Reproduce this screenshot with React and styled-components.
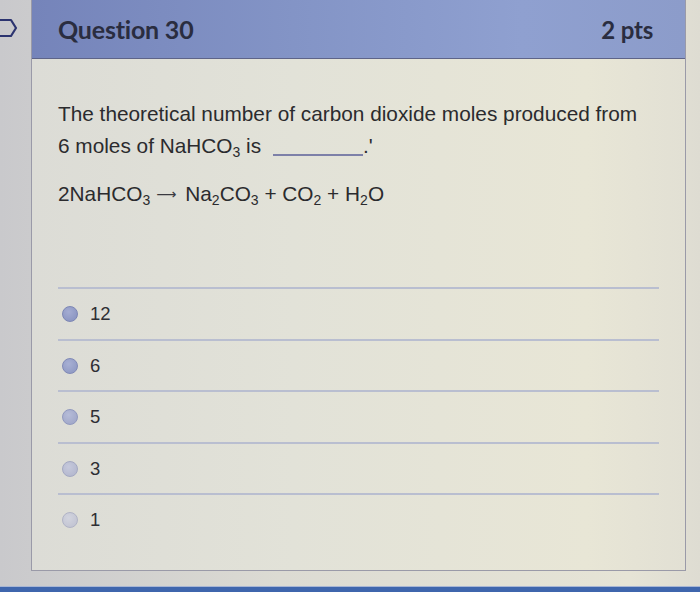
import React from "react";
import styled, { createGlobalStyle } from "styled-components";

const Global = createGlobalStyle`
  html, body { margin: 0; padding: 0; }
  body {
    width: 700px;
    height: 592px;
    overflow: hidden;
    background: #d9d8d2;
    font-family: "Liberation Sans", Arial, sans-serif;
  }
`;

const Page = styled.div`
  width: 700px;
  height: 592px;
  display: flex;
  flex-direction: column;
  background: linear-gradient(90deg, #c9c9cc 0%, #dcdbd3 40%, #e6e4d6 90%, #dedcd2 100%);
`;

const Main = styled.div`
  flex: 1;
  display: flex;
  align-items: flex-start;
`;

const Gutter = styled.div`
  width: 31px;
  flex-shrink: 0;
  padding-top: 18px;
  display: flex;
`;

const Card = styled.div`
  width: 655px;
  height: 571px;
  box-sizing: border-box;
  border: 1px solid #9a9aa8;
  border-top: none;
  display: flex;
  flex-direction: column;
  background: linear-gradient(90deg, #dcdcd6 0%, #e2e2d8 40%, #e8e6d6 85%, #e2e0d4 100%);
`;

const Header = styled.div`
  height: 59px;
  box-sizing: border-box;
  border-bottom: 1px solid #5e6488;
  background: linear-gradient(90deg, #7584ba 0%, #8394c6 40%, #8fa0d0 75%, #8c9cca 100%);
  display: flex;
  align-items: center;
  justify-content: space-between;
  padding: 0 32px 0 26px;
`;

const Title = styled.div`
  font-family: Lato, "Open Sans", sans-serif;
  font-weight: 700;
  font-size: ${(p) => p.$size}px;
  color: #2a2d40;
  letter-spacing: -0.2px;
`;

const Body = styled.div`
  padding: 39px 30px 0 26px;
  display: flex;
  flex-direction: column;
`;

const Text = styled.p`
  margin: 0;
  font-size: 20.8px;
  line-height: 32px;
  color: #2b2b2e;
`;

const Blank = styled.span`
  display: inline-block;
  width: 90px;
  margin-left: 6px;
  border-bottom: 2px solid #7d80a8;
  vertical-align: -3px;
  height: 18px;
`;

const Equation = styled.p`
  margin: 19px 0 0;
  font-size: 20.8px;
  line-height: 26px;
  color: #2b2b2e;
`;

const Arrow = styled.span`
  display: inline-block;
  font-family: "DejaVu Sans", sans-serif;
  font-size: 14px;
  line-height: 14px;
  margin: 0 9px 0 6px;
  vertical-align: 2px;
  color: #3a3a40;
`;

const Sub = styled.sub`
  font-size: 14px;
  vertical-align: -4px;
  line-height: 0;
`;

const Answers = styled.div`
  margin-top: 80px;
  margin-right: -4px;
  display: flex;
  flex-direction: column;
`;

const Answer = styled.div`
  height: 51.5px;
  box-sizing: border-box;
  border-top: 2px solid #b9bed0;
  display: flex;
  align-items: center;
  gap: 12px;
  padding-left: 4px;
  padding-top: 1px;
`;

const Radio = styled.span`
  width: 16px;
  height: 16px;
  border-radius: 50%;
  box-sizing: border-box;
  background: radial-gradient(circle at 40% 35%, ${(p) => p.$hi} 0%, ${(p) => p.$fill} 70%);
  border: 1px solid ${(p) => p.$edge};
`;

const AnswerText = styled.span`
  font-size: 18.5px;
  color: #2e2e33;
`;

const BottomBar = styled.div`
  height: 5px;
  background: #3f66ad;
  border-top: 1px solid #a8b6d4;
`;

const answers = [
  { v: "12", hi: "#a4acd2", fill: "#8e98c4", edge: "#7c86b4" },
  { v: "6", hi: "#a8b0d4", fill: "#939dc6", edge: "#8089b6" },
  { v: "5", hi: "#b6bcd8", fill: "#a3aacb", edge: "#9098be" },
  { v: "3", hi: "#c6c9dc", fill: "#b6bad0", edge: "#a3a8c2" },
  { v: "1", hi: "#d2d4de", fill: "#c4c6d4", edge: "#b0b3c6" },
];

export default function App() {
  return (
    <>
      <Global />
      <Page>
        <Main>
          <Gutter>
            <svg width="18" height="20" viewBox="0 0 18 20">
              <path d="M-2 2 H11 L16 10 L11 18 H-2" fill="none" stroke="#2c3470" strokeWidth="2.2" strokeLinejoin="round" />
            </svg>
          </Gutter>
          <Card>
            <Header>
              <Title $size={25}>Question 30</Title>
              <Title $size={24}>2 pts</Title>
            </Header>
            <Body>
              <Text>
                The theoretical number of carbon dioxide moles produced from
                <br />6 moles of NaHCO<Sub>3</Sub> is <Blank />.'
              </Text>
              <Equation>
                2NaHCO<Sub>3</Sub><Arrow>⟶</Arrow>Na<Sub>2</Sub>CO<Sub>3</Sub> + CO<Sub>2</Sub> + H<Sub>2</Sub>O
              </Equation>
              <Answers>
                {answers.map((a) => (
                  <Answer key={a.v}>
                    <Radio $hi={a.hi} $fill={a.fill} $edge={a.edge} />
                    <AnswerText>{a.v}</AnswerText>
                  </Answer>
                ))}
              </Answers>
            </Body>
          </Card>
        </Main>
        <BottomBar />
      </Page>
    </>
  );
}
